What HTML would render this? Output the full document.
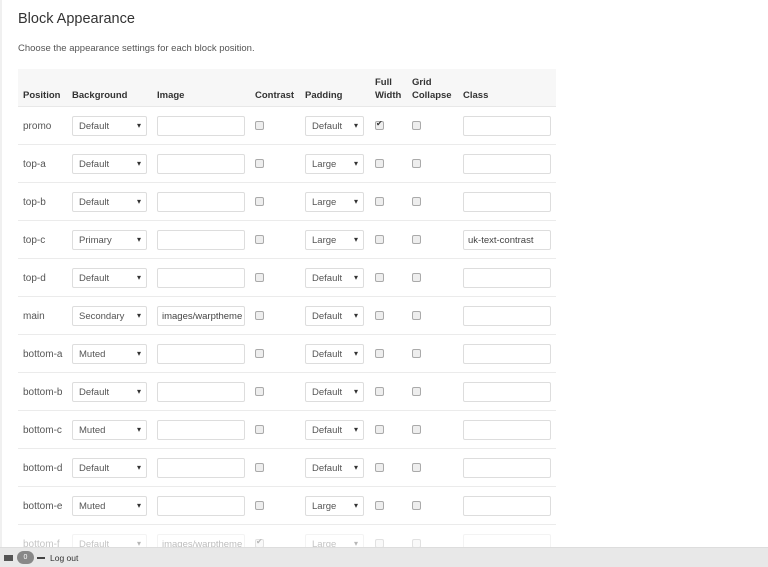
<!DOCTYPE html>
<html><head><meta charset="utf-8"><style>
*{box-sizing:border-box;margin:0;padding:0}
body{width:768px;height:567px;overflow:hidden;background:#fff;font-family:"Liberation Sans",Arial,sans-serif;color:#444;position:relative}
.lb{position:absolute;left:0;top:0;width:2px;height:567px;background:#f0f0f0}
h1{position:absolute;left:18px;top:11px;font-size:14.5px;font-weight:normal;color:#333}
.d{position:absolute;left:18px;top:43px;font-size:9.5px;color:#555}
.hd{position:absolute;left:18px;top:69px;width:538px;height:38px;background:#f7f7f7;border-bottom:1px solid #e8e8e8;font-size:9.5px;font-weight:bold;color:#333}
.hd span{position:absolute;line-height:13px}
.r{position:absolute;left:18px;width:538px;height:38px;border-bottom:1px solid #ebebeb;font-size:10px;color:#555}
.r>*{position:absolute}
.p{left:5px;top:14px}
.s{top:9px;height:20px;border:1px solid #ddd;border-radius:2px;padding:3px 6px 0;line-height:14px;font-size:9.5px;color:#555;background:#fff}
.s:after{content:"▾";position:absolute;right:5px;top:4px;font-size:8px;line-height:10px;color:#333}
.b{left:54px;width:75px}
.pd{left:287px;width:59px}
.i{top:9px;height:20px;border:1px solid #ddd;border-radius:2px;background:#fff;font-size:9.5px;line-height:14px;padding:3px 0 0 4px;overflow:hidden;white-space:nowrap;color:#444}
.im{left:139px;width:88px}
.cl{left:445px;width:88px}
.c{top:14px;width:9px;height:9px;border:1px solid #aaa;border-radius:2px;background:#eee}
.c1{left:237px}.c2{left:357px}.c3{left:394px}
.k:after{content:"✔";position:absolute;left:0;top:-3px;font-size:8px;color:#333}
.f{opacity:.35}
.bar{position:absolute;left:0;top:547px;width:768px;height:20px;background:#e8e8e8;border-top:1px solid #ddd;font-size:8.5px;color:#333}
</style></head><body>
<div class="lb"></div>
<h1>Block Appearance</h1>
<div class="d">Choose the appearance settings for each block position.</div>
<div class="hd">
<span style="left:5px;top:20px">Position</span>
<span style="left:54px;top:20px">Background</span>
<span style="left:139px;top:20px">Image</span>
<span style="left:237px;top:20px">Contrast</span>
<span style="left:287px;top:20px">Padding</span>
<span style="left:357px;top:7px">Full<br>Width</span>
<span style="left:394px;top:7px">Grid<br>Collapse</span>
<span style="left:445px;top:20px">Class</span>
</div>

<div class="r" style="top:107px"><span class="p">promo</span><div class="s b">Default</div><div class="i im"></div><div class="c c1"></div><div class="s pd">Default</div><div class="c c2 k"></div><div class="c c3"></div><div class="i cl"></div></div>
<div class="r" style="top:145px"><span class="p">top-a</span><div class="s b">Default</div><div class="i im"></div><div class="c c1"></div><div class="s pd">Large</div><div class="c c2"></div><div class="c c3"></div><div class="i cl"></div></div>
<div class="r" style="top:183px"><span class="p">top-b</span><div class="s b">Default</div><div class="i im"></div><div class="c c1"></div><div class="s pd">Large</div><div class="c c2"></div><div class="c c3"></div><div class="i cl"></div></div>
<div class="r" style="top:221px"><span class="p">top-c</span><div class="s b">Primary</div><div class="i im"></div><div class="c c1"></div><div class="s pd">Large</div><div class="c c2"></div><div class="c c3"></div><div class="i cl">uk-text-contrast</div></div>
<div class="r" style="top:259px"><span class="p">top-d</span><div class="s b">Default</div><div class="i im"></div><div class="c c1"></div><div class="s pd">Default</div><div class="c c2"></div><div class="c c3"></div><div class="i cl"></div></div>
<div class="r" style="top:297px"><span class="p">main</span><div class="s b">Secondary</div><div class="i im">images/warptheme</div><div class="c c1"></div><div class="s pd">Default</div><div class="c c2"></div><div class="c c3"></div><div class="i cl"></div></div>
<div class="r" style="top:335px"><span class="p">bottom-a</span><div class="s b">Muted</div><div class="i im"></div><div class="c c1"></div><div class="s pd">Default</div><div class="c c2"></div><div class="c c3"></div><div class="i cl"></div></div>
<div class="r" style="top:373px"><span class="p">bottom-b</span><div class="s b">Default</div><div class="i im"></div><div class="c c1"></div><div class="s pd">Default</div><div class="c c2"></div><div class="c c3"></div><div class="i cl"></div></div>
<div class="r" style="top:411px"><span class="p">bottom-c</span><div class="s b">Muted</div><div class="i im"></div><div class="c c1"></div><div class="s pd">Default</div><div class="c c2"></div><div class="c c3"></div><div class="i cl"></div></div>
<div class="r" style="top:449px"><span class="p">bottom-d</span><div class="s b">Default</div><div class="i im"></div><div class="c c1"></div><div class="s pd">Default</div><div class="c c2"></div><div class="c c3"></div><div class="i cl"></div></div>
<div class="r" style="top:487px"><span class="p">bottom-e</span><div class="s b">Muted</div><div class="i im"></div><div class="c c1"></div><div class="s pd">Large</div><div class="c c2"></div><div class="c c3"></div><div class="i cl"></div></div>
<div class="r f" style="top:525px"><span class="p">bottom-f</span><div class="s b">Default</div><div class="i im">images/warptheme</div><div class="c c1 k"></div><div class="s pd">Large</div><div class="c c2"></div><div class="c c3"></div><div class="i cl"></div></div>

<div class="bar">
<div style="position:absolute;left:4px;top:7px;width:9px;height:6px;background:#555"></div>
<div style="position:absolute;left:17px;top:3px;width:17px;height:13px;border-radius:7px;background:#888;color:#fff;font-size:7px;text-align:center;line-height:13px">0</div>
<div style="position:absolute;left:37px;top:9px;width:8px;height:2px;background:#444"></div>
<span style="position:absolute;left:50px;top:5px">Log out</span>
</div>
</body></html>
